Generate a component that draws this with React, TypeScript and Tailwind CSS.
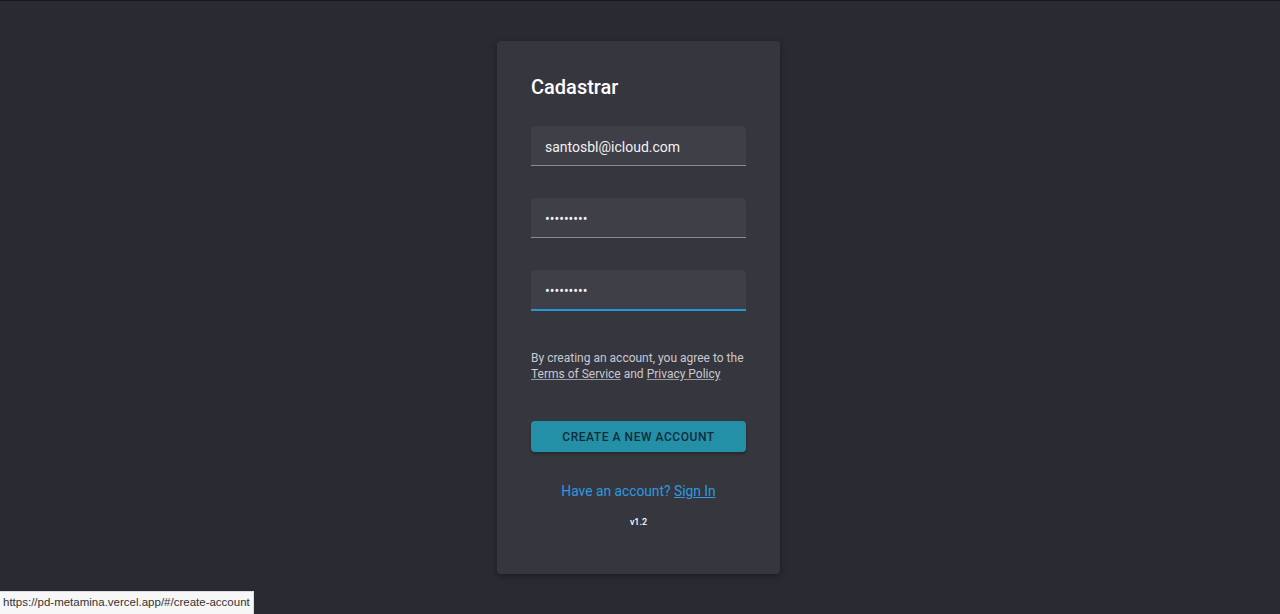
import React from "react";

export default function App() {
  return (
    <div
      className="relative min-h-[614px] w-full overflow-hidden border-t border-[#18181d] bg-[#2a2a32]"
      style={{ fontFamily: "Roboto, 'Liberation Sans', sans-serif" }}
    >
      <div className="flex justify-center pt-10">
        {/* Card */}
        <div className="mr-[3px] w-[283px] rounded bg-[#36363f] px-[34px] pb-[45px] pt-[32px] shadow-[0_2px_6px_rgba(0,0,0,0.35)]">
          <h1 className="text-[20px] font-medium leading-7 text-white">Cadastrar</h1>

          <form className="mt-[25px] flex flex-col gap-8" onSubmit={(e) => e.preventDefault()}>
            <div className="h-[40px] rounded-t bg-[#3f3f48] border-b border-[#8a8a92] flex items-center px-[14px] pt-[3px]">
              <input
                className="w-full bg-transparent text-[14px] text-[#f2f2f2] outline-none"
                defaultValue="santosbl@icloud.com"
              />
            </div>
            <div className="h-[40px] rounded-t bg-[#3f3f48] border-b border-[#8a8a92] flex items-center px-[14px] pt-[3px]">
              <input
                type="password"
                className="w-full bg-transparent text-[14px] text-[#f2f2f2] outline-none"
                defaultValue="123456789"
              />
            </div>
            <div className="h-[41px] rounded-t bg-[#3f3f48] border-b-2 border-[#2196d8] flex items-center px-[14px] pt-[3px]">
              <input
                type="password"
                className="w-full bg-transparent text-[14px] text-[#f2f2f2] outline-none"
                defaultValue="123456789"
              />
            </div>
          </form>

          <p className="mt-[39px] text-[12px] leading-4 text-[#c9c9cf]">
            By creating an account, you agree to the{" "}
            <a href="#" className="underline decoration-[#9a9aa2]">Terms of Service</a> and{" "}
            <a href="#" className="underline decoration-[#9a9aa2]">Privacy Policy</a>
          </p>

          <button className="mt-[39px] h-[31px] w-full rounded bg-[#2390a8] text-[12px] font-medium tracking-[0.045em] text-[#0f2c3a] shadow-[0_2px_3px_rgba(0,0,0,0.3)]">
            CREATE A NEW ACCOUNT
          </button>

          <p className="mt-[29px] text-center text-[13.8px] leading-5 text-[#2b9be0]">
            Have an account? <a href="#" className="underline">Sign In</a>
          </p>

          <p className="mt-[14px] text-center text-[9px] font-medium leading-[14px] text-white">v1.2</p>
        </div>
      </div>

      {/* Status bar link preview */}
      <div
        className="absolute bottom-0 left-0 flex h-[23px] items-center border-t border-r border-[#dcdcdc] bg-[#f7f7f7] px-[3px] text-[11.5px] text-[#333]"
        style={{ fontFamily: "'Liberation Sans', Arial, sans-serif" }}
      >
        https://pd-metamina.vercel.app/#/create-account
      </div>
    </div>
  );
}
